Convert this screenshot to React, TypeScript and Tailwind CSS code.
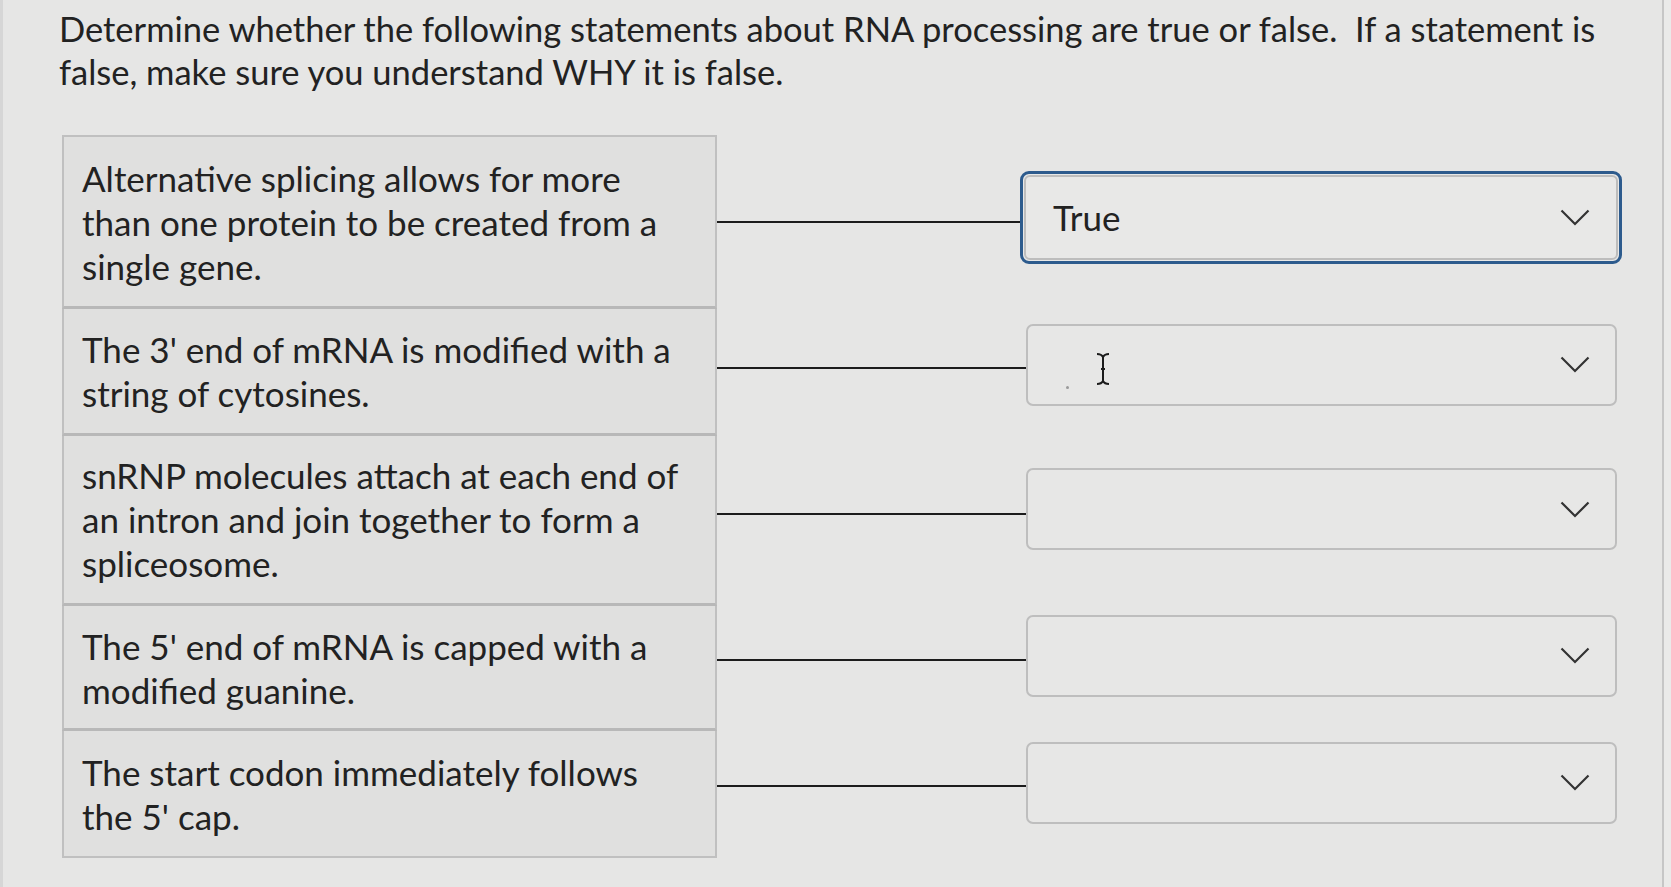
import React from "react";

type Row = {
  lines: string[];
  value?: string;
  focused?: boolean;
  cursor?: boolean;
  shift: string;
  lift: string;
  pt: string;
  pb: string;
};

const rows: Row[] = [
  {
    lines: [
      "Alternative splicing allows for more",
      "than one protein to be created from a",
      "single gene.",
    ],
    value: "True",
    focused: true,
    shift: "pb-[0px]",
    lift: "mb-[10px]",
    pt: "pt-[19px]",
    pb: "pb-[18px]",
  },
  {
    lines: ["The 3' end of mRNA is modified with a", "string of cytosines."],
    cursor: true,
    shift: "pb-[10px]",
    lift: "mb-[6px]",
    pt: "pt-[18px]",
    pb: "pb-[18px]",
  },
  {
    lines: [
      "snRNP molecules attach at each end of",
      "an intron and join together to form a",
      "spliceosome.",
    ],
    shift: "pb-[14px]",
    lift: "mb-[10px]",
    pt: "pt-[17px]",
    pb: "pb-[18px]",
  },
  {
    lines: ["The 5' end of mRNA is capped with a", "modified guanine."],
    shift: "pb-[18px]",
    lift: "mb-[8px]",
    pt: "pt-[18px]",
    pb: "pb-[16px]",
  },
  {
    lines: ["The start codon immediately follows", "the 5' cap."],
    shift: "pb-[18px]",
    lift: "mb-[6px]",
    pt: "pt-[19px]",
    pb: "pb-[18px]",
  },
];

function Chevron() {
  return (
    <svg width="30" height="17" viewBox="0 0 30 17" className="shrink-0">
      <polyline
        points="1.5,1.5 15,15 28.5,1.5"
        fill="none"
        stroke="#333"
        strokeWidth="2.2"
        strokeLinejoin="miter"
      />
    </svg>
  );
}

function IBeam() {
  return (
    <svg width="16" height="34" viewBox="0 0 16 34" className="absolute left-[67px] top-[26px]">
      <path
        d="M2 2 C5 2 7 3 8 5 C9 3 11 2 14 2 M8 5 L8 29 M2 32 C5 32 7 31 8 29 C9 31 11 32 14 32 M6 17 L10 17"
        fill="none"
        stroke="#1c1c1c"
        strokeWidth="2"
      />
    </svg>
  );
}

function Select({ row }: { row: Row }) {
  if (row.focused) {
    return (
      <div className={`w-[602px] h-[93px] mr-[40px] ${row.lift} rounded-[9px] border-[3px] border-[#2d5b8d] p-[1px] bg-[#e8e8e7]`}>
        <div className="h-full w-full rounded-[6px] border-2 border-[#bdbdbd] flex items-center pl-[27px] pr-[26px]">
          <span className="flex-1 text-[35px] leading-none text-[#222]">{row.value}</span>
          <Chevron />
        </div>
      </div>
    );
  }
  return (
    <div className={`relative w-[591px] h-[82px] mr-[45px] ${row.lift} rounded-[7px] border-2 border-[#bebebe] bg-[#e7e7e6] flex items-center justify-end pr-[25px]`}>
      {row.cursor && <IBeam />}
      {row.cursor && <div className="absolute left-[38px] top-[60px] w-[3px] h-[3px] rounded-full bg-[#9a9a9a]" />}
      <Chevron />
    </div>
  );
}

export default function App() {
  return (
    <div className="w-[1671px] h-[887px] overflow-hidden flex bg-[#e6e6e5] font-['Lato','Noto_Sans',sans-serif] text-[#222]">
      <div className="w-[1664px] h-full border-r-2 border-[#c6c6c6] border-l-[3px] border-l-[#d6d6d6] bg-[#e6e6e5]">
        <div className="pl-[56px] pt-[7px] text-[34.5px] leading-[43px] whitespace-nowrap">
          Determine whether the following statements about RNA processing are true or false.&nbsp; If a statement is
          <br />
          false, make sure you understand WHY it is false.
        </div>
        <div className="mt-[42px] ml-[59px] flex flex-col">
          {rows.map((row, i) => (
            <div key={i} className="flex items-stretch">
              <div
                className={`w-[655px] shrink-0 bg-[#e0e0df] border-x-2 border-[#c0c0c0] pl-[18px] ${row.pt} ${row.pb} ${
                  i === 0
                    ? "border-t-2 border-b-[3px] border-b-[#b8b8b8]"
                    : i === rows.length - 1
                    ? "border-b-2"
                    : "border-b-[3px] border-b-[#b8b8b8]"
                }`}
              >
                <div className="text-[35px] leading-[44px] whitespace-nowrap">
                  {row.lines.map((l, j) => (
                    <div key={j}>{l}</div>
                  ))}
                </div>
              </div>
              <div className={`flex-1 flex items-center ${row.shift}`}>
                <div className="flex-1 h-[2px] bg-[#1c1c1c]" />
                <Select row={row} />
              </div>
            </div>
          ))}
        </div>
      </div>
      <div className="flex-1 h-full bg-[#eaeae9]" />
    </div>
  );
}
